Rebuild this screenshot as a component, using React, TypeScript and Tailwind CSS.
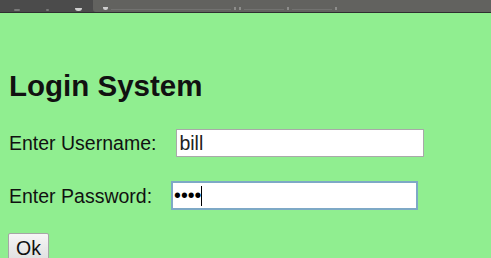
import React from 'react';

const App: React.FC = () => {
  return (
    <div className="w-[491px] h-[258px] overflow-hidden bg-[#90ee90] font-['Liberation_Sans',Arial,sans-serif] text-[#111]">
      {/* browser chrome, cut off at the top */}
      <div className="flex h-[13px] bg-[#4b4b4b] border-b border-[#2f2f2f]">
        <div className="flex w-[93px] items-end gap-[26px] pl-[14px] pb-[1px]">
          <span className="block w-[6px] h-[2px] bg-[#7a7a7a] rounded-sm" />
          <span className="block w-[3px] h-[2px] bg-[#7a7a7a] rounded-sm" />
          <span className="block w-[7px] h-[3px] bg-[#d0d0d0] rounded-b-full" />
        </div>
        <div className="flex-1 flex items-end bg-[#62625f] rounded-bl-[3px] pl-[10px] pb-[2px] gap-[3px]">
          <span className="block w-[5px] h-[3px] bg-[#cfcfcf] rounded-b-full" />
          <span className="block w-[120px] h-[1px] bg-[#727270]" />
          <span className="block w-[2px] h-[3px] bg-[#8d8d8b]" />
          <span className="block w-[2px] h-[3px] bg-[#8d8d8b]" />
          <span className="block w-[40px] h-[1px] bg-[#727270]" />
          <span className="block w-[2px] h-[3px] bg-[#8d8d8b]" />
          <span className="block w-[40px] h-[1px] bg-[#727270]" />
          <span className="block w-[2px] h-[3px] bg-[#8d8d8b]" />
        </div>
      </div>

      <main className="pl-[9px] pt-[57px]">
        <h2 className="text-[29.5px] leading-[32px] font-bold">Login System</h2>

        <form className="mt-[27px] flex flex-col text-[19.5px]" onSubmit={(e) => e.preventDefault()}>
          <div className="flex items-center h-[28px]">
            <label htmlFor="user" className="leading-[28px]">Enter Username:</label>
            <input
              id="user"
              type="text"
              defaultValue="bill"
              className="ml-[20px] w-[248px] h-[28px] bg-white border border-[#a9a9a9] px-[2px] text-[19.5px] leading-[26px] text-[#222] outline-none"
            />
          </div>

          <div className="flex items-center h-[29px] mt-[24px]">
            <label htmlFor="pass" className="leading-[28px]">Enter Password:</label>
            <div className="relative ml-[19px]">
              <input
                id="pass"
                type="password"
                defaultValue="bill"
                className="w-[247px] h-[29px] bg-white border-2 border-[#7ea9c6] px-[1px] text-[19.5px] leading-[25px] text-black outline-none caret-transparent"
              />
              <span className="absolute left-[30px] top-[5px] w-px h-[20px] bg-black" />
            </div>
          </div>

          <div className="mt-[23px]">
            <button
              type="submit"
              className="-ml-[1px] w-[41px] h-[30px] pt-[1px] text-[19.5px] leading-[23px] text-[#111] bg-gradient-to-b from-[#f6f6f6] to-[#dedede] border border-[#a6a6a6] rounded-[2px] text-center"
            >
              Ok
            </button>
          </div>
        </form>
      </main>
    </div>
  );
};

export default App;
